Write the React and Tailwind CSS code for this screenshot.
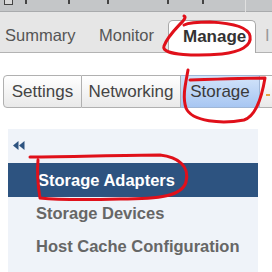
import React from 'react'

function Annotations() {
  return (
    <svg className="absolute inset-0 pointer-events-none" width="272" height="272" viewBox="0 0 272 272" fill="none">
      <g stroke="#e0101a" strokeWidth="3" strokeLinecap="round" strokeLinejoin="round">
        <path d="M184 16 C190 18 170 30 164 46 C160 56 200 56 222 54 C240 52 252 46 250 36 C248 26 230 23 210 22 C198 22 188 23 184 25" />
        <path d="M188 70 C186 82 182 96 186 108 C192 122 222 124 244 120 C256 116 262 96 265 78 C250 78 220 79 190 80" />
        <path d="M30 157 C70 157 120 155 160 155 C178 157 190 166 186 182 C182 196 160 199 120 199 C80 200 50 199 40 198 C38 186 37 172 38 160" />
      </g>
    </svg>
  )
}

function App() {
  return (
    <div className="relative w-[272px] h-[272px] overflow-hidden bg-white font-['Liberation_Sans',Arial,sans-serif]">
      <div className="h-[12px] bg-[#c4c6c8] border-b border-[#a9abad] flex items-start relative">
        <div className="ml-[4px] w-[9px] h-[5px] border border-t-0 border-[#444] bg-[#d8d8d8]"></div>
        <div className="ml-[12px] w-[2px] h-[4px] bg-[#444]"></div>
        <div className="ml-[41px] w-[2px] h-[4px] bg-[#444]"></div>
        <div className="ml-[37px] w-[2px] h-[4px] bg-[#444]"></div>
        <div className="ml-[58px] w-[2px] h-[4px] bg-[#444]"></div>
        <div className="ml-[33px] w-[2px] h-[4px] bg-[#444]"></div>
        <div className="ml-[41px] w-px h-[12px] bg-[#e0e0e0]"></div>
      </div>
      <div className="h-[41px] bg-[#e6e6e6] border-b border-[#b3b3b3] flex items-end text-[16.5px] text-[#555]">
        <div className="shrink-0 h-[33px] flex items-center pl-[5px] w-[99px]">Summary</div>
        <div className="shrink-0 h-[33px] flex items-center w-[69px]">Monitor</div>
        <div className="shrink-0 h-[33px] w-[88px] -mb-px bg-white border border-b-0 border-[#a8a8a8] rounded-t-[5px] flex items-center pl-[14px] font-bold text-[#333] text-[17px]">Manage</div>
        <div className="shrink-0 h-[33px] ml-[9px] flex items-center text-[#999]">I</div>
      </div>
      <div className="h-[22px]"></div>
      <div className="flex h-[33px] ml-[3px] text-[17px] text-[#444]">
        <div className="shrink-0 w-[79px] border border-[#b0b0b0] rounded-l-[4px] bg-gradient-to-b from-white to-[#e9e9e9] flex items-center justify-center">Settings</div>
        <div className="shrink-0 w-[99px] border border-l-0 border-[#b0b0b0] bg-gradient-to-b from-white to-[#e9e9e9] flex items-center justify-center">Networking</div>
        <div className="shrink-0 w-[79px] border border-l-0 border-[#9fb6d6] bg-gradient-to-b from-[#d3e4fa] to-[#a7c6f2] flex items-center justify-center text-[#3a3a3a]">Storage</div>
        <div className="shrink-0 w-[20px] border border-l-0 border-[#b0b0b0] bg-gradient-to-b from-white to-[#e9e9e9] flex items-center pl-[6px]">
          <div className="w-[4px] h-[2px] bg-[#e8a040] mt-[6px]"></div>
        </div>
      </div>
      <div className="h-[21px]"></div>
      <div className="ml-[8px] w-[250px] h-[150px] bg-[#eff3f9] font-bold text-[16.5px]">
        <div className="h-[34px] flex items-center pl-[5px]">
          <svg width="12" height="9" viewBox="0 0 12 9" className="mt-[-1px]">
            <path d="M5.5 0 L0 4.5 L5.5 9 Z" fill="#2d5380" />
            <path d="M11.5 0 L6 4.5 L11.5 9 Z" fill="#2d5380" />
          </svg>
        </div>
        <div className="h-[34px] bg-[#2d5380] text-white flex items-center pl-[30px]">Storage Adapters</div>
        <div className="h-[32px] flex items-center pl-[28px] text-[#666]">Storage Devices</div>
        <div className="h-[34px] flex items-center pl-[28px] text-[#666]">Host Cache Configuration</div>
      </div>
      <Annotations />
    </div>
  )
}

export default App
